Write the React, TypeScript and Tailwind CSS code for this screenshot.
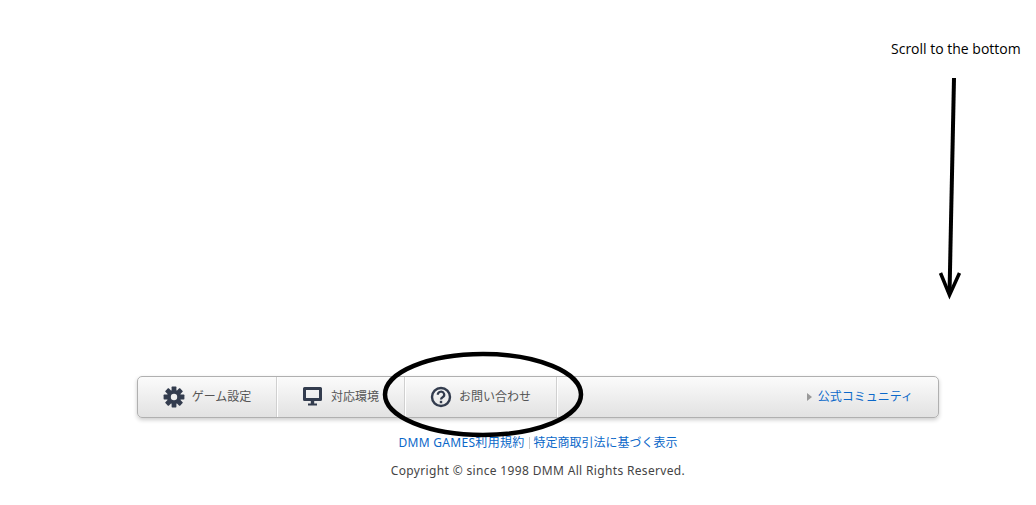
import { ReactNode } from 'react'

const jp = "font-['Noto_Sans','Noto_Sans_CJK_JP',sans-serif]"

function GearIcon() {
  return (
    <svg width="22" height="22" viewBox="0 0 22 22" className="shrink-0">
      <g fill="#333c4e">
        <circle cx="11" cy="11" r="7" />
        {[0, 45, 90, 135, 180, 225, 270, 315].map((a) => (
          <rect key={a} x="8.6" y="0.6" width="4.8" height="5" rx="0.6" transform={`rotate(${a} 11 11)`} />
        ))}
      </g>
      <circle cx="11" cy="11" r="3.2" fill="#efefef" />
    </svg>
  )
}

function MonitorIcon() {
  return (
    <svg width="19" height="20" viewBox="0 0 19 20" className="ml-px shrink-0">
      <path fill="#333c4e" fillRule="evenodd" d="M1.500 0h16A1.500 1.500 0 0 1 19 1.500v11a1.500 1.500 0 0 1-1.500 1.500h-16A1.500 1.500 0 0 1 0 12.500v-11A1.500 1.500 0 0 1 1.500 0ZM3 3v8h13V3Z" />
      <path fill="#333c4e" d="M7.800 14h3.400v2.400h2.800V18.500H5v-2.100h2.800Z" />
    </svg>
  )
}

function HelpIcon() {
  return (
    <svg width="22" height="22" viewBox="0 0 22 22" className="shrink-0">
      <circle cx="11" cy="11" r="9" fill="none" stroke="#333c4e" strokeWidth="2.400" />
      <path d="M7.800 8.800a3.200 3 0 1 1 4.800 2.500c-1 .6-1.600 1.100-1.600 2.300" fill="none" stroke="#333c4e" strokeWidth="2.200" />
      <rect x="9.800" y="14.800" width="2.400" height="2.400" fill="#333c4e" />
    </svg>
  )
}

function NavItem({ icon, label, width, gap }: { icon: ReactNode; label: string; width: string; gap: string }) {
  return (
    <a className={`flex h-full items-center justify-center border-r border-[#d0d0d0] shadow-[1px_0_0_#fff] ${width} ${gap}`}>
      {icon}
      <span className="text-xs text-[#555]">{label}</span>
    </a>
  )
}

export default function App() {
  return (
    <div className={`relative h-[505px] w-[1036px] overflow-hidden bg-white ${jp}`}>
      <div className="ml-[137px] flex w-[802px] flex-col items-center pt-[376px]">
        <nav className="flex h-[42px] w-full items-center rounded-[5px] border border-[#b0b0b0] bg-gradient-to-b from-[#fbfbfb] to-[#e2e2e2] shadow-[0_2px_4px_rgba(0,0,0,0.2)]">
          <NavItem icon={<GearIcon />} label="ゲーム設定" width="w-[139px]" gap="gap-[7px]" />
          <NavItem icon={<MonitorIcon />} label="対応環境" width="w-[128px]" gap="gap-[9px]" />
          <NavItem icon={<HelpIcon />} label="お問い合わせ" width="w-[152px]" gap="gap-[7px]" />
          <div className="ml-auto flex items-center gap-[6px] pr-[25px]">
            <span className="h-0 w-0 border-y-[4px] border-l-[5px] border-y-transparent border-l-[#999]" />
            <a className="text-xs text-[#0b68c9]">公式コミュニティ</a>
          </div>
        </nav>
        <div className="mt-[17px] flex items-center text-xs leading-4 text-[#0b68c9]">
          <a className="tracking-[0.3px]">DMM GAMES利用規約</a>
          <span className="mx-[4px] h-3 w-px bg-[#ccc]" />
          <a>特定商取引法に基づく表示</a>
        </div>
        <p className="mt-[12px] text-xs leading-4 tracking-[0.34px] text-[#444]">Copyright © since 1998 DMM All Rights Reserved.</p>
      </div>

      {/* annotations drawn over the page */}
      <span className="absolute top-[39px] left-[891px] font-['Open_Sans',sans-serif] text-[14px] leading-[19px] text-black">Scroll to the bottom</span>
      <svg className="pointer-events-none absolute inset-0" width="1036" height="505" fill="none" stroke="#000">
        <ellipse cx="483" cy="394.500" rx="98" ry="40.500" strokeWidth="4.500" />
        <path d="M954 78 949.500 294" strokeWidth="4" />
        <path d="M940.500 273 949.500 295 959.500 273" strokeWidth="3.500" />
      </svg>
    </div>
  )
}
